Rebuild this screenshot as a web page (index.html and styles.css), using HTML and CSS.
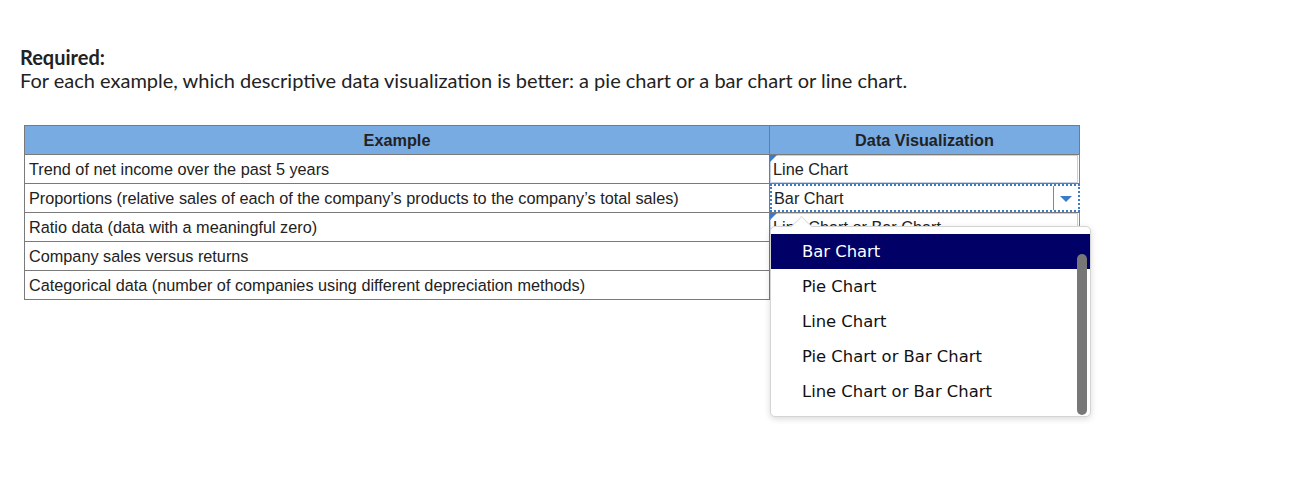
FILE: index.html
```html
<!DOCTYPE html>
<html lang="en">
<head>
  <meta charset="UTF-8">
  <title>Data Visualization</title>
  <link rel="stylesheet" href="styles.css">
</head>
<body>

  <div class="question">
    <p class="required">Required:</p>
    <p class="prompt">For each example, which descriptive data visualization is better: a pie chart or a bar chart or line chart.</p>
  </div>

  <div class="table-wrap">
    <table class="answer-table">
      <tr>
        <th class="col-example">Example</th>
        <th class="col-vis">Data Visualization</th>
      </tr>
      <tr>
        <td>Trend of net income over the past 5 years</td>
        <td class="pick"><div class="field answered">Line Chart</div></td>
      </tr>
      <tr>
        <td>Proportions (relative sales of each of the company’s products to the company’s total sales)</td>
        <td class="pick"><div class="field focused">Bar Chart<span class="arrow"></span></div></td>
      </tr>
      <tr>
        <td>Ratio data (data with a meaningful zero)</td>
        <td class="pick"><div class="field answered">Line Chart or Bar Chart</div></td>
      </tr>
      <tr>
        <td>Company sales versus returns</td>
        <td class="pick"><div class="field"></div></td>
      </tr>
      <tr>
        <td>Categorical data (number of companies using different depreciation methods)</td>
        <td class="pick"><div class="field"></div></td>
      </tr>
    </table>

    <!-- open dropdown for row 2 -->
    <div class="menu">
      <ul>
        <li class="selected">Bar Chart</li>
        <li>Pie Chart</li>
        <li>Line Chart</li>
        <li>Pie Chart or Bar Chart</li>
        <li>Line Chart or Bar Chart</li>
      </ul>
      <div class="scrollbar"></div>
    </div>
  </div>

</body>
</html>
```

FILE: styles.css
```css
html, body {
  height: 100%;
}

body {
  margin: 0;
  padding: 46px 20px 0 20px;
  box-sizing: border-box;
  min-height: 492px;
  background-color: #ffffff;
  color: #222;
}

.question {
  font-family: Lato, "Open Sans", sans-serif;
  font-size: 20px;
  line-height: 23px;
  color: #222;
}

.question p {
  margin: 0;
}

.required {
  font-weight: bold;
}

.table-wrap {
  position: relative;
  margin: 33px 0 0 4px;
  width: 1056px;
  padding-bottom: 130px;
}

.answer-table {
  border-collapse: collapse;
  width: 1056px;
  font-family: "Liberation Sans", Arial, sans-serif;
  font-size: 16.25px;
  color: #222;
}

.answer-table th {
  background-color: #78abe2;
  border: 1px solid #7a7a7a;
  height: 28px;
  font-weight: bold;
  text-align: center;
  padding: 0;
}

.col-example {
  width: 744px;
}

.answer-table td {
  border: 1px solid #7a7a7a;
  height: 28px;
  padding: 0 4px;
}

.answer-table td.pick {
  padding: 0;
  border-right-color: #5b8fd0;
}

.field {
  position: relative;
  height: 26px;
  line-height: 26px;
  margin: 0 1px 0 0;
  padding: 0 2px;
  border: 1px solid #c4d2e4;
  background-color: #fff;
}

.field.answered::before {
  content: "";
  position: absolute;
  top: -1px;
  left: -1px;
  border-top: 7px solid #3b7bc8;
  border-right: 7px solid transparent;
}

.field.focused {
  border: 2px dotted #3b7bc8;
  height: 24px;
  line-height: 24px;
  margin: 0 -1px 0 0;
  padding: 0 3px 0 2px;
}

.arrow {
  position: absolute;
  top: 0;
  right: 0;
  width: 24px;
  height: 24px;
  border-left: 1px solid #5b8fd0;
}

.arrow::after {
  content: "";
  position: absolute;
  left: 6px;
  top: 10px;
  border-top: 6px solid #3b7bc8;
  border-left: 6px solid transparent;
  border-right: 6px solid transparent;
}

.menu {
  position: absolute;
  left: 746px;
  top: 101px;
  width: 319px;
  height: 189px;
  background-color: #fff;
  border: 1px solid #d4d4d4;
  border-radius: 5px;
  box-shadow: 0 2px 6px rgba(0, 0, 0, 0.15);
  font-family: "DejaVu Sans", Verdana, sans-serif;
  font-size: 16.4px;
}

.menu::before {
  content: "";
  position: absolute;
  left: 23px;
  top: -8px;
  width: 14px;
  height: 14px;
  background-color: #fff;
  border-top: 1px solid #dcdcdc;
  border-left: 1px solid #dcdcdc;
  transform: rotate(45deg);
}

.menu ul {
  position: relative;
  list-style: none;
  margin: 7px 0 0 0;
  padding: 0;
}

.menu li {
  height: 35px;
  line-height: 35px;
  padding-left: 31px;
  color: #111;
}

.menu li.selected {
  background-color: #000066;
  color: #fff;
}

.scrollbar {
  position: absolute;
  right: 3px;
  top: 27px;
  width: 10px;
  height: 161px;
  border-radius: 5px;
  background-color: #777;
}
```
